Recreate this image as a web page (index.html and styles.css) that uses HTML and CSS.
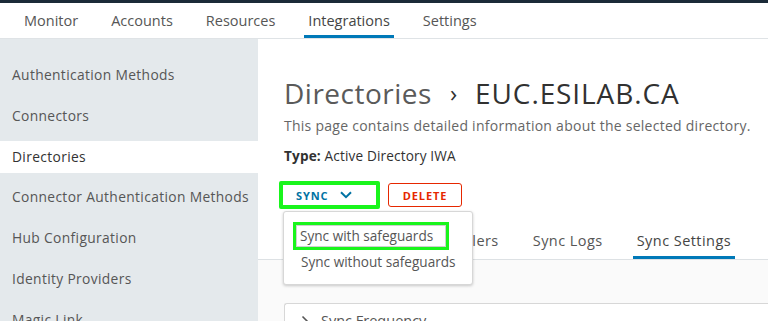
FILE: index.html
```html
<!DOCTYPE html>
<html>
<head>
<meta charset="utf-8">
<link rel="stylesheet" href="styles.css">
</head>
<body>
<div class="topbar"></div>
<nav class="nav">
  <a class="nav-item">Monitor</a>
  <a class="nav-item">Accounts</a>
  <a class="nav-item">Resources</a>
  <a class="nav-item active">Integrations</a>
  <a class="nav-item">Settings</a>
</nav>
<div class="layout">
  <aside class="sidebar">
    <div class="side-item">Authentication Methods</div>
    <div class="side-item">Connectors</div>
    <div class="side-item active">Directories</div>
    <div class="side-item">Connector Authentication Methods</div>
    <div class="side-item">Hub Configuration</div>
    <div class="side-item">Identity Providers</div>
    <div class="side-item">Magic Link</div>
  </aside>
  <main class="main">
    <div class="content">
      <h1 class="title"><span class="crumb">Directories</span><span class="sep">›</span><span class="name">EUC.ESILAB.CA</span></h1>
      <p class="desc">This page contains detailed information about the selected directory.</p>
      <p class="type"><b>Type:</b> Active Directory IWA</p>
      <div class="actions">
        <div class="hl-sync">
          <button class="btn-sync">SYNC
            <svg class="chev" width="12" height="8" viewBox="0 0 12 8"><path d="M1 1.2 L6 6.2 L11 1.2" fill="none" stroke="#0072a3" stroke-width="2"/></svg>
          </button>
        </div>
        <button class="btn-delete">DELETE</button>
        <div class="menu">
          <div class="hl-item"><div class="menu-item first">Sync with safeguards</div></div>
          <div class="menu-item">Sync without safeguards</div>
        </div>
      </div>
      <div class="tabs">
        <span class="tab">Users</span>
        <span class="tab">Domain Controllers</span>
        <span class="tab">Sync Logs</span>
        <span class="tab active">Sync Settings</span>
      </div>
    </div>
    <div class="lower">
      <div class="card">
        <svg class="card-chev" width="8" height="12" viewBox="0 0 8 12"><path d="M1.5 1.5 L6 6 L1.5 10.5" fill="none" stroke="#565656" stroke-width="1.6"/></svg>
        <span>Sync Frequency</span>
      </div>
    </div>
  </main>
</div>
</body>
</html>
```
FILE: styles.css
```css
* { box-sizing: border-box; }
html, body { margin: 0; padding: 0; }
body {
  width: 768px;
  height: 321px;
  overflow: hidden;
  font-family: "Open Sans", "Liberation Sans", sans-serif;
  color: #565656;
  background: #fff;
}
.topbar { height: 3px; background: #1b2a38; }
.nav {
  height: 36px;
  display: flex;
  gap: 25px;
  padding-left: 20px;
  border-bottom: 1px solid #dfe3e6;
}
.nav-item {
  font-size: 14.5px;
  color: #565656;
  padding: 0 4px;
  display: flex;
  align-items: center;
  border-bottom: 3px solid transparent;
  padding-top: 3px;
}
.nav-item.active { border-bottom-color: #0079b8; color: #454545; }
.layout { display: flex; height: 282px; }
.sidebar {
  width: 258px;
  flex: none;
  background: #e4e9ec;
  padding-top: 20px;
  display: flex;
  flex-direction: column;
  gap: 8.8px;
  overflow: hidden;
}
.side-item {
  height: 32px;
  flex: none;
  line-height: 32px;
  padding-left: 12px;
  font-size: 13.8px;
  letter-spacing: 0.35px;
  color: #565656;
  white-space: nowrap;
}
.side-item.active { background: #fff; color: #333; }
.main { flex: 1; display: flex; flex-direction: column; min-width: 0; }
.content { padding-left: 26px; }
.title {
  margin: 0;
  padding-top: 36px;
  height: 72px;
  font-weight: 400;
  font-size: 28px;
  line-height: 36px;
  display: flex;
  white-space: nowrap;
}
.crumb { color: #5a5a5a; letter-spacing: 0.5px; }
.sep { color: #313131; margin: 0 18px 0 18px; font-size: 24px; }
.name { color: #313131; letter-spacing: 0.9px; }
.desc {
  margin: 6px 0 0;
  font-size: 14px;
  letter-spacing: 0.26px;
  line-height: 18px;
  color: #666;
  white-space: nowrap;
}
.type {
  margin: 12px 0 0;
  font-size: 13.6px;
  letter-spacing: 0.15px;
  line-height: 18px;
  color: #313131;
}
.type b { font-weight: 700; color: #313131; }
.actions {
  position: relative;
  display: flex;
  align-items: center;
  gap: 8px;
  margin-top: 16px;
  margin-left: -5px;
  height: 28px;
}
.hl-sync {
  border: 4px solid #19f51c;
  border-radius: 2px;
  width: 101px;
  height: 28px;
  display: flex;
}
.btn-sync {
  flex: 1;
  border: none;
  background: #fff;
  color: #0072a3;
  font-family: inherit;
  font-weight: 700;
  font-size: 11px;
  letter-spacing: 0.9px;
  text-align: left;
  padding: 0 0 0 13px;
  display: flex;
  align-items: center;
  gap: 12px;
}
.btn-delete {
  width: 74px;
  height: 24px;
  border: 1px solid #e62700;
  border-radius: 3px;
  background: #fff;
  color: #e62700;
  font-family: inherit;
  font-weight: 700;
  font-size: 11px;
  letter-spacing: 0.9px;
  padding: 0;
}
.menu {
  position: absolute;
  left: 4px;
  top: 30px;
  width: 190px;
  height: 74px;
  background: #fff;
  border: 1px solid #d7d7d7;
  border-radius: 3px;
  box-shadow: 0 1px 3px rgba(0,0,0,0.2);
  padding: 10px 0 0 9px;
  z-index: 2;
}
.hl-item {
  border: 3px solid #19f51c;
  width: 156px;
  height: 28px;
  display: flex;
}
.menu-item {
  font-size: 13.6px;
  line-height: 24px;
  color: #565656;
  padding-left: 8px;
  white-space: nowrap;
}
.menu-item.first {
  flex: 1;
  padding-left: 3px;
  border: 1px solid #cfcfcf;
  line-height: 20px;
}
.tabs {
  display: flex;
  gap: 34px;
  height: 47px;
  margin-top: 4px;
  border-bottom: 1px solid #dde1e4;
  margin-left: -26px;
  padding-left: 26px;
}
.tab {
  font-size: 14.5px;
  letter-spacing: 0.45px;
  color: #565656;
  padding: 18px 4px 0;
  margin: 0 -4px;
  border-bottom: 3px solid transparent;
  white-space: nowrap;
}
.tab.active { border-bottom-color: #0079b8; color: #454545; }
.lower {
  flex: 1;
  background: #fafafa;
  padding: 43px 0 0 26px;
}
.card {
  height: 60px;
  background: #fff;
  border: 1px solid #d7d7d7;
  border-right: none;
  border-radius: 3px 0 0 3px;
  padding: 7px 0 0 16px;
  display: flex;
  align-items: flex-start;
  gap: 12px;
  font-size: 14.5px;
  color: #565656;
}
.card-chev { margin-top: 4px; }
```
